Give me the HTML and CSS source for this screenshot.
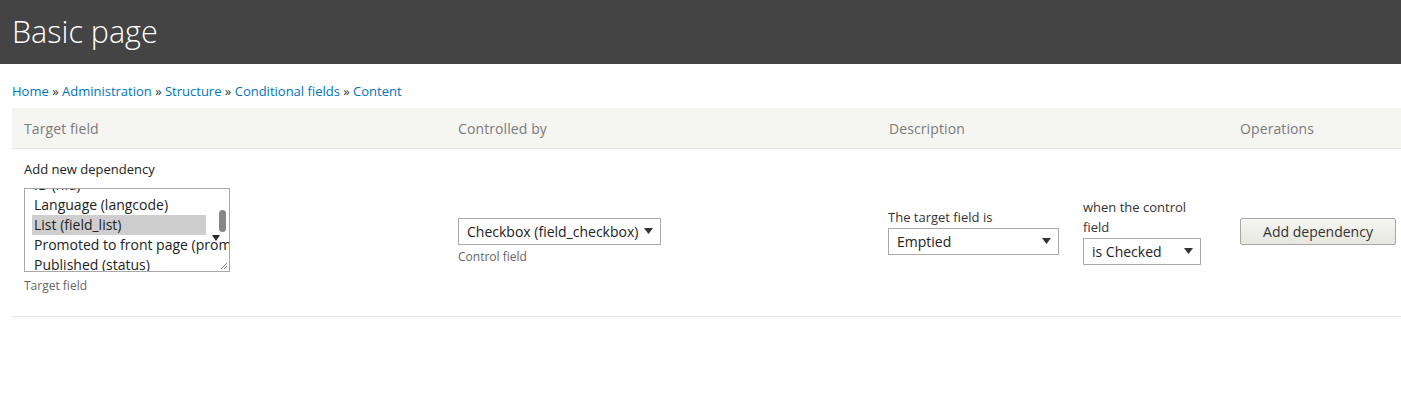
FILE: index.html
```html
<!DOCTYPE html>
<html>
<head>
<meta charset="utf-8">
<link rel="stylesheet" href="styles.css">
</head>
<body>
<header class="page-head">
  <h1 class="page-title">Basic page</h1>
</header>
<main class="content">
  <nav class="breadcrumb">
    <a href="#">Home</a> » <a href="#">Administration</a> » <a href="#">Structure</a> » <a href="#">Conditional fields</a> » <a href="#">Content</a>
  </nav>
  <table class="deps">
    <colgroup>
      <col class="c1"><col class="c2"><col class="c3"><col class="c4"><col class="c5">
    </colgroup>
    <thead>
      <tr>
        <th>Target field</th>
        <th>Controlled by</th>
        <th colspan="2" class="th-desc">Description</th>
        <th>Operations</th>
      </tr>
    </thead>
    <tbody>
      <tr>
        <td class="cell-target">
          <label class="label">Add new dependency</label>
          <div class="listbox">
            <ul class="options">
              <li class="opt">ID (nid)</li>
              <li class="opt">Language (langcode)</li>
              <li class="opt selected">List (field_list)</li>
              <li class="opt">Promoted to front page (promote)</li>
              <li class="opt">Published (status)</li>
              <li class="opt">Sticky at top of lists (sticky)</li>
            </ul>
            <span class="thumb"></span>
            <span class="arrow-down"></span>
            <svg class="grip" width="8" height="8" viewBox="0 0 8 8"><path d="M7 1L1 7M7 4L4 7" stroke="#888" stroke-width="1" fill="none"/></svg>
          </div>
          <div class="desc">Target field</div>
        </td>
        <td class="cell-control">
          <div class="select w-checkbox"><span>Checkbox (field_checkbox)</span><svg class="caret" width="9" height="6" viewBox="0 0 9 6"><path d="M0 0H9L4.5 6Z" fill="#333"/></svg></div>
          <div class="desc desc-tight">Control field</div>
        </td>
        <td class="cell-state">
          <div class="label-line">The target field is</div>
          <div class="select w-emptied"><span>Emptied</span><svg class="caret" width="9" height="6" viewBox="0 0 9 6"><path d="M0 0H9L4.5 6Z" fill="#333"/></svg></div>
        </td>
        <td class="cell-cond">
          <div class="label-line narrow">when the control field</div>
          <div class="select w-checked"><span>is Checked</span><svg class="caret" width="9" height="6" viewBox="0 0 9 6"><path d="M0 0H9L4.5 6Z" fill="#333"/></svg></div>
        </td>
        <td class="cell-ops">
          <button class="button" type="button">Add dependency</button>
        </td>
      </tr>
    </tbody>
  </table>
</main>
</body>
</html>
```

FILE: styles.css
```css
html, body {
  margin: 0;
  padding: 0;
  background: #fff;
  font-family: "Open Sans", "DejaVu Sans", sans-serif;
  color: #222;
}

.page-head {
  background: #444;
  height: 64px;
  padding: 0 12px;
  display: flex;
  align-items: center;
}

.page-title {
  margin: 0;
  font-size: 30.5px;
  font-weight: 300;
  color: #fff;
  line-height: 1;
  padding-bottom: 2px;
}

.content {
  padding: 0 0 0 12px;
}

.breadcrumb {
  margin-top: 18px;
  font-size: 13px;
  line-height: 18px;
  color: #333;
}

.breadcrumb a {
  color: #0074bd;
  text-decoration: none;
}

.deps {
  margin-top: 8px;
  width: 1389px;
  border-collapse: collapse;
  table-layout: fixed;
}

.c1 { width: 434px; }
.c2 { width: 430px; }
.c3 { width: 195px; }
.c4 { width: 157px; }
.c5 { width: 173px; }

.deps th {
  background: #f5f5f2;
  height: 40px;
  padding: 0 12px;
  text-align: left;
  font-weight: 400;
  font-size: 14px;
  letter-spacing: 0.1px;
  color: #7b7b7b;
  border-bottom: 1px solid #e6e4df;
}

.deps th.th-desc {
  padding-left: 13px;
}

.deps td {
  padding: 0 12px;
  vertical-align: middle;
  border-bottom: 1px solid #e6e4df;
  height: 167px;
  box-sizing: border-box;
}

.deps td.cell-target {
  padding-top: 11px;
  padding-bottom: 22px;
}

.deps td.cell-control {
  padding-top: 17px;
}

.deps td.cell-state,
.deps td.cell-cond {
  padding-bottom: 4px;
}

.deps td.cell-ops {
  padding-bottom: 2px;
}

.label {
  display: block;
  font-size: 13px;
  line-height: 18px;
  color: #222;
  margin-bottom: 10px;
}

.listbox {
  position: relative;
  width: 206px;
  height: 84px;
  box-sizing: border-box;
  border: 1px solid #a8a8a8;
  overflow: hidden;
  background: #fff;
}

.options {
  list-style: none;
  margin: -14px 0 0 0;
  padding: 0 0 0 7px;
}

.opt {
  width: 170px;
  height: 20px;
  line-height: 20px;
  padding-left: 2px;
  font-size: 14px;
  color: #222;
  white-space: nowrap;
}

.opt.selected {
  background: #cecece;
  width: 172px;
}

.thumb {
  position: absolute;
  left: 194px;
  top: 21px;
  width: 7px;
  height: 22px;
  border-radius: 4px;
  background: #878787;
}

.arrow-down {
  position: absolute;
  left: 187px;
  top: 46px;
  width: 0;
  height: 0;
  border-left: 4px solid transparent;
  border-right: 4px solid transparent;
  border-top: 6px solid #2b2b2b;
}

.grip {
  position: absolute;
  right: 1px;
  bottom: 1px;
}

.desc {
  font-size: 12px;
  line-height: 17px;
  color: #666;
  margin-top: 5px;
}

.desc.desc-tight {
  margin-top: 3px;
}

.label-line {
  font-size: 13px;
  line-height: 20px;
  color: #333;
  margin-bottom: 1px;
}

.label-line.narrow {
  width: 118px;
}

.select {
  display: flex;
  align-items: center;
  justify-content: space-between;
  box-sizing: border-box;
  height: 27px;
  border: 1px solid #aaa;
  background: #fff;
  padding: 0 7px 0 8px;
  font-size: 14px;
  color: #222;
}

.w-checkbox { width: 203px; }
.w-emptied { width: 171px; }
.w-checked { width: 118px; }

.caret {
  flex: none;
}

.button {
  width: 156px;
  height: 27px;
  border: 1px solid #a6a6a6;
  border-radius: 2px;
  background: linear-gradient(to bottom, #f6f6f3, #e7e7df);
  font-family: "Open Sans", "DejaVu Sans", sans-serif;
  font-size: 14px;
  color: #333;
  padding: 0;
}
```
